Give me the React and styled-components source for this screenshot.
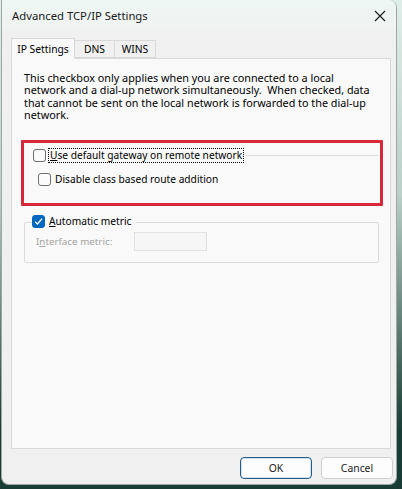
import React from 'react';
import styled, { createGlobalStyle } from 'styled-components';

const Global = createGlobalStyle`
  html, body { margin: 0; padding: 0; }
  body {
    background: #163a31;
    font-family: "Segoe UI", "Noto Sans", "Liberation Sans", sans-serif;
    font-size: 10.2px;
    color: #000;
  }
`;

const Page = styled.div`
  width: 402px;
  height: 489px;
  display: flex;
  align-items: flex-start;
  background: linear-gradient(#dfeee8 0%, #b9cfc7 40%, #183d34 88%);
`;

const Window = styled.div`
  width: 396px;
  height: 485px;
  margin-left: 1px;
  border: 1px solid #9fa6a3;
  border-top: none;
  border-radius: 0 8px 8px 8px;
  background: #f0f0f0;
  display: flex;
  flex-direction: column;
  overflow: hidden;
  box-sizing: border-box;
`;

const TitleBar = styled.div`
  height: 31px;
  display: flex;
  align-items: center;
  justify-content: space-between;
  padding: 0 9px 0 10px;
  background: linear-gradient(#edf7f3, #f0f2f1);
  font-size: 11.3px;
  color: #1a1a1a;
`;

const Close = styled.div`
  width: 14px;
  height: 14px;
  display: flex;
  align-items: center;
  justify-content: center;
`;

const Body = styled.div`
  flex: 1;
  display: flex;
  flex-direction: column;
  padding: 7px 5px 0 9px;
`;

const Tabs = styled.div`
  display: flex;
  align-items: flex-end;
  height: 20px;
  position: relative;
  z-index: 1;
`;

const Tab = styled.div`
  width: ${p => p.$w}px;
  height: ${p => (p.$active ? '21px' : '18px')};
  margin-bottom: ${p => (p.$active ? '-1px' : '0')};
  display: flex;
  align-items: center;
  justify-content: center;
  box-sizing: border-box;
  background: ${p => (p.$active ? '#f9f9f9' : '#f0f0f0')};
  border: 1px solid #d9d9d9;
  border-bottom: ${p => (p.$active ? '1px solid #f9f9f9' : '1px solid #d9d9d9')};
  border-left: ${p => (p.$first ? '1px solid #d9d9d9' : 'none')};
  font-size: 10.3px;
`;

const Panel = styled.div`
  flex: 1;
  background: #f9f9f9;
  border: 1px solid #d9d9d9;
  padding: 13px 11px 0 12px;
  display: flex;
  flex-direction: column;
`;

const Note = styled.p`
  margin: 0;
  font-size: 10.8px;
  line-height: 12.4px;
  white-space: pre-line;
  color: #000;
`;

const Highlight = styled.div`
  margin: 18px -4px 0 -3px;
  border: 3px solid #d62839;
  border-radius: 1px;
  height: 54px;
  display: flex;
  flex-direction: column;
  padding: 6px 2px 0 9px;
`;

const GroupHead = styled.div`
  display: flex;
  align-items: center;
  gap: 3px;
`;

const Rule = styled.div`
  flex: 1;
  height: 1px;
  background: #d9d9d9;
  margin-top: 1px;
`;

const Box = styled.span`
  width: 13px;
  height: 13px;
  box-sizing: border-box;
  border-radius: 3px;
  border: 1px solid ${p => (p.$checked ? '#0067c0' : '#6f6f6f')};
  background: ${p => (p.$checked ? '#0067c0' : '#fbfbfb')};
  display: inline-flex;
  align-items: center;
  justify-content: center;
  flex-shrink: 0;
`;

const Label = styled.span`
  font-size: 10.2px;
  line-height: 13px;
  padding: 0 1px;
  outline: ${p => (p.$focus ? '1px dotted #000' : 'none')};
  white-space: nowrap;
  u { text-decoration: underline; }
`;

const CheckRow = styled.div`
  display: flex;
  align-items: center;
  gap: 3px;
  margin: ${p => p.$m || '0'};
`;

const Group = styled.div`
  margin: 16px 0 0 0;
  border: 1px solid #dcdcdc;
  border-radius: 2px;
  height: 41px;
  display: flex;
  flex-direction: column;
  box-sizing: border-box;
`;

const GroupTitle = styled.div`
  display: flex;
  align-items: center;
  gap: 3px;
  margin: -8px 0 0 7px;
  padding-right: 4px;
  background: #f9f9f9;
  align-self: flex-start;
`;

const FieldRow = styled.div`
  display: flex;
  align-items: center;
  margin: 4px 0 0 11px;
`;

const DimLabel = styled.span`
  width: 98px;
  color: #a3a3a3;
  font-size: 9.8px;
  u { text-decoration: underline; }
`;

const Input = styled.div`
  width: 73px;
  height: 19px;
  box-sizing: border-box;
  border: 1px solid #e2e2e2;
  background: #f6f6f6;
`;

const Footer = styled.div`
  height: 35px;
  display: flex;
  justify-content: flex-end;
  align-items: flex-start;
  gap: 9px;
  margin-right: -2px;
  padding: 8px 0 0 0;
  box-sizing: border-box;
`;

const Button = styled.button`
  width: 72px;
  height: 22px;
  border-radius: 4px;
  border: 1px solid ${p => (p.$default ? '#2a5c86' : '#cfcfcf')};
  box-shadow: ${p => (p.$default ? 'inset 0 0 0 1px #cfe0ee' : 'none')};
  background: #fdfdfd;
  font-family: inherit;
  font-size: 10.4px;
  color: #1a1a1a;
  padding: 0;
`;

const Check = () => (
  <svg width="9" height="9" viewBox="0 0 9 9">
    <path d="M1 4.6 L3.4 7 L8 1.8" fill="none" stroke="#fff" strokeWidth="1.3" />
  </svg>
);

const note = [
  'This checkbox only applies when you are connected to a local',
  'network and a dial-up network simultaneously.\u00a0 When checked, data',
  'that cannot be sent on the local network is forwarded to the dial-up',
  'network.',
].join('\n');

export default function App() {
  return (
    <>
      <Global />
      <Page>
        <Window>
          <TitleBar>
            <span>Advanced TCP/IP Settings</span>
            <Close>
              <svg width="12" height="12" viewBox="0 0 12 12">
                <path d="M1 1 L11 11 M11 1 L1 11" stroke="#1a1a1a" strokeWidth="1.1" />
              </svg>
            </Close>
          </TitleBar>
          <Body>
            <Tabs>
              <Tab $active $first $w={64}>IP Settings</Tab>
              <Tab $w={40}>DNS</Tab>
              <Tab $w={41}>WINS</Tab>
            </Tabs>
            <Panel>
              <Note>{note}</Note>
              <Highlight>
                <GroupHead>
                  <Box />
                  <Label $focus><u>U</u>se default gateway on remote network</Label>
                  <Rule />
                </GroupHead>
                <CheckRow $m="11px 0 0 5px">
                  <Box />
                  <Label>Disable class based route addition</Label>
                </CheckRow>
              </Highlight>
              <Group>
                <GroupTitle>
                  <Box $checked><Check /></Box>
                  <Label><u>A</u>utomatic metric</Label>
                </GroupTitle>
                <FieldRow>
                  <DimLabel>I<u>n</u>terface metric:</DimLabel>
                  <Input />
                </FieldRow>
              </Group>
            </Panel>
            <Footer>
              <Button $default>OK</Button>
              <Button>Cancel</Button>
            </Footer>
          </Body>
        </Window>
      </Page>
    </>
  );
}
